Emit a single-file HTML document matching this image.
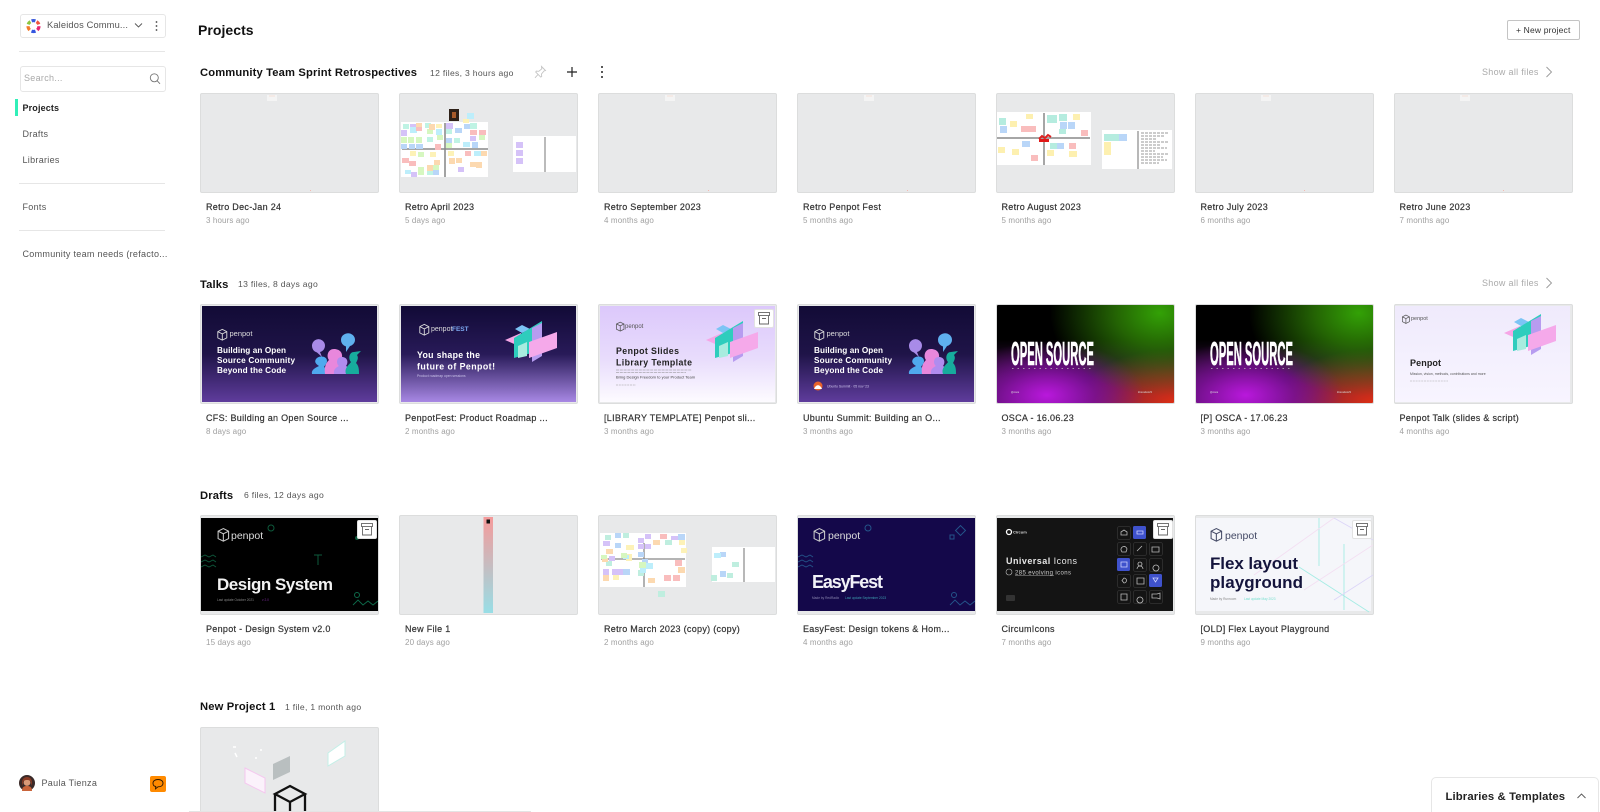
<!DOCTYPE html>
<html lang="en">
<head>
<meta charset="utf-8">
<title>Projects</title>
<style>
*{box-sizing:border-box}
html,body{margin:0;padding:0;background:#fff}
body{width:1600px;height:812px;overflow:hidden;position:relative;font-family:"Liberation Sans","DejaVu Sans",sans-serif;color:#222}
#w{position:absolute;left:0;top:0;width:1600px;height:812px;overflow:hidden;filter:blur(.35px)}
.a{position:absolute;white-space:nowrap;line-height:1}
.c{position:absolute;width:179px;height:100px;border:1.5px solid #dcdddd;border-radius:2px;background:#e8e9ea;overflow:hidden}
.c svg{position:absolute;left:-1.5px;top:-1.5px;width:179px;height:100px;display:block}
.n{position:absolute;white-space:nowrap;font-size:9px;letter-spacing:.3px;color:#333;line-height:12px;-webkit-text-stroke:.2px #333;margin-top:-.5px}
.d{position:absolute;white-space:nowrap;font-size:8px;letter-spacing:.12px;color:#a0a0a0;line-height:10px;margin-top:1px}
.t{position:absolute;white-space:nowrap;font-weight:bold;font-size:11.2px;letter-spacing:.15px;color:#111;line-height:14px}
.s{position:absolute;white-space:nowrap;font-size:8.6px;letter-spacing:.3px;color:#555;line-height:12px}
.m{position:absolute;left:22.5px;font-size:9px;letter-spacing:.3px;color:#555;line-height:12px;white-space:nowrap}
.l{position:absolute;left:19px;width:146px;height:1px;background:#e6e6e6}
.sa{position:absolute;left:1482px;font-size:9px;letter-spacing:.3px;color:#aaa;line-height:12px;white-space:nowrap}
.ar{position:absolute;width:20px;height:19px;background:#fff;border:1px solid #e2e2e2;border-radius:2px}
.os{background:radial-gradient(ellipse 62% 85% at 92% 8%,#33a106 0,rgba(45,125,5,.8) 40%,rgba(20,60,0,0) 100%),radial-gradient(ellipse 55% 55% at 28% 92%,#b918dc 0,rgba(130,15,160,.75) 50%,rgba(100,10,130,0) 100%),radial-gradient(ellipse 55% 55% at 100% 100%,#dc2f14 0,rgba(170,40,30,.75) 55%,rgba(130,40,40,0) 100%),linear-gradient(#000 0,#000 35%,#3b1145 75%,#5a1766 100%)}
text{font-family:"Liberation Sans",sans-serif}
</style>
</head>
<body>
<svg width="0" height="0" style="position:absolute">
<defs>
<g id="iso">
<polygon points="116,25 123,21 131,25 123,29" fill="#7cc4f5"/>
<polygon points="106,36 122,29 122,43" fill="#f6a6e6"/>
<polygon points="115,34 143,17 143,46 115,54" fill="#2ecdbd"/>
<polygon points="119,42 128,38 128,52 119,54" fill="#a8ecdf"/>
<polygon points="133,24 143,19 143,52 133,58" fill="#b79cf0"/>
<polygon points="130,38 158,28 158,44 130,54" fill="#f5a9ea"/>
</g>
<g id="ppl">
<path d="M112 42a6.500 6.500 0 1 1 8 6l2 5-5-4.500a6.500 6.500 0 0 1-5-6.500z" fill="#a88be8"/>
<path d="M141 36a7 6.500 0 1 1 9 6l-4 6 0-5.500a7 6.500 0 0 1-5-6.500z" fill="#5fb0ee"/>
<path d="M112 70c-1-4 3-6 7-8-3-2-5-4-3-7 3-4 11-3 11 2 0 3-2 4-3 6 3 2 4 4 4 7z" fill="#50a9ee"/>
<path d="M125 70c-1-7 1-11 4-14-3-4-1-11 5-11 5 0 9 3 8 9-1 4 3 9 2 16z" fill="#e887dc"/>
<path d="M134 70c-1-5 3-7 5-8-3-2-3-9 3-9 5 0 7 5 4 9 4 2 6 4 6 8z" fill="#b08cef"/>
<path d="M146 70c-2-6 3-9 5-12-3-3-2-10 3-10l7-1-4 4c2 3 0 6-1 8 3 3 3 7 3 11z" fill="#17ac9d"/>
</g>
<g id="box" fill="none" stroke-width="1"><path d="M2 4l5-2.500 5 2.500v7l-5 2.500-5-2.500zM2 4l5 2.500 5-2.500M7 6.500v7"/></g>
<g id="arc" fill="none" stroke="#666" stroke-width=".9"><rect x="5.500" y="4.500" width="11" height="3"/><path d="M6.500 7.500v8.500h9v-8.500M9 10.500h4"/></g>
</defs>
</svg>
<div id="w">

<!-- SIDEBAR -->
<div class="a" style="left:19.500px;top:13.500px;width:146px;height:24px;border:1px solid #e6e6e6;border-radius:3px"></div>
<svg class="a" style="left:26px;top:18px" width="15" height="16" viewBox="0 0 15 16"><circle cx="7.500" cy="8" r="7" fill="#fff"/><g fill="none" stroke-width="3.200"><path d="M5.600 2.900A5.500 5.500 0 0 1 9.400 2.900" stroke="#3b5bdb"/><path d="M10.600 3.600A5.500 5.500 0 0 1 12.800 6.400" stroke="#f0563e"/><path d="M13 8.200A5.500 5.500 0 0 1 11.300 12" stroke="#e8266f"/><path d="M9.500 13.100A5.500 5.500 0 0 1 5.500 13.100" stroke="#3556e0"/><path d="M3.700 12A5.500 5.500 0 0 1 2 8.200" stroke="#f47a2a"/><path d="M2.200 6.400A5.500 5.500 0 0 1 4.400 3.600" stroke="#8cc63f"/></g></svg>
<div class="a" style="left:47px;top:21px;font-size:9.300px;letter-spacing:.15px;color:#555">Kaleidos Commu...</div>
<svg class="a" style="left:134px;top:22px" width="9" height="7" viewBox="0 0 9 7"><path d="M1 1.500l3.500 3.500 3.500-3.500" fill="none" stroke="#555" stroke-width=".9"/></svg>
<svg class="a" style="left:155px;top:20px" width="3" height="12" viewBox="0 0 3 12"><g fill="#444"><circle cx="1.500" cy="2" r=".9"/><circle cx="1.500" cy="6" r=".9"/><circle cx="1.500" cy="10" r=".9"/></g></svg>
<div class="l" style="top:51px"></div>
<div class="a" style="left:19.500px;top:65.500px;width:146px;height:26px;border:1px solid #e6e6e6;border-radius:3px"></div>
<div class="a" style="left:24px;top:74px;font-size:9px;letter-spacing:.3px;color:#aaa">Search...</div>
<svg class="a" style="left:149px;top:72px" width="12" height="13" viewBox="0 0 12 13"><circle cx="5.300" cy="5.800" r="4" fill="none" stroke="#777" stroke-width=".9"/><path d="M8.200 8.800l2.800 3" stroke="#777" stroke-width=".9"/></svg>
<div class="a" style="left:15px;top:99px;width:2.500px;height:16.500px;background:#31efb8"></div>
<div class="m" style="top:102px;font-weight:bold;color:#222;letter-spacing:.15px">Projects</div>
<div class="m" style="top:128px">Drafts</div>
<div class="m" style="top:154px">Libraries</div>
<div class="l" style="top:183px"></div>
<div class="m" style="top:201px">Fonts</div>
<div class="l" style="top:230px"></div>
<div class="m" style="top:248px">Community team needs (refacto...</div>
<svg class="a" style="left:19px;top:775px" width="16" height="16" viewBox="0 0 16 16"><circle cx="8" cy="8" r="8" fill="#3a2a28"/><path d="M3 16c0-4 2-5 5-5s5 1 5 5z" fill="#c9643a"/><circle cx="8" cy="7.500" r="3.400" fill="#d99a78"/><path d="M3 8c0-4 2-6 5-6s5 2 5 6l-1 3V7C11 5 9 5 8 5S5 5 4 7v4z" fill="#8a3b24"/></svg>
<div class="a" style="left:41.500px;top:779px;font-size:9px;letter-spacing:.3px;color:#555">Paula Tienza</div>
<div class="a" style="left:150px;top:775.500px;width:16px;height:16px;border-radius:2px;background:#ff8a00"></div>
<svg class="a" style="left:150px;top:775.500px" width="16" height="16" viewBox="0 0 16 16"><path d="M8 3.500c3 0 5 1.500 5 3.700s-2 3.600-5 3.600l-2.500 2 .3-2.300C4 10.200 3 8.800 3 7.200 3 5 5 3.500 8 3.500z" fill="none" stroke="#2a1500" stroke-width=".9"/></svg>

<!-- HEADER -->
<div class="a" style="left:198px;top:23px;font-size:14px;font-weight:bold;color:#111;letter-spacing:.05px">Projects</div>
<div class="a" style="left:1507px;top:20px;width:72.500px;height:20px;border:1px solid #c4c4c4;border-radius:2px;text-align:center;font-size:8.500px;line-height:18px;letter-spacing:.18px;color:#333">+ New project</div>

<!-- SECTION 1 -->
<div class="t" style="left:200px;top:66px">Community Team Sprint Retrospectives</div>
<div class="s" style="left:430px;top:66.500px">12 files, 3 hours ago</div>
<svg class="a" style="left:534px;top:65px" width="13" height="14" viewBox="0 0 13 14"><path d="M7.500 1.500l4 4-1.500 .5-2.500 3 .2 2.500-1 .6-5-5 .6-1 2.500 .2 3-2.500zM4 9.500l-3 3.300" fill="none" stroke="#c4c4c4" stroke-width=".9"/></svg>
<svg class="a" style="left:566px;top:66px" width="12" height="12" viewBox="0 0 12 12"><path d="M6 1v10M1 6h10" stroke="#222" stroke-width="1.200"/></svg>
<svg class="a" style="left:600px;top:65px" width="4" height="14" viewBox="0 0 4 14"><g fill="#222"><circle cx="2" cy="2" r="1"/><circle cx="2" cy="7" r="1"/><circle cx="2" cy="12" r="1"/></g></svg>
<div class="sa" style="top:66px">Show all files</div>
<svg class="a" style="left:1545px;top:66px" width="8" height="12" viewBox="0 0 8 12"><path d="M1.500 1l5 5-5 5" fill="none" stroke="#999" stroke-width=".9"/></svg>

<div class="c" style="left:200px;top:93px"><svg viewBox="0 0 179 100"><rect x="67" y="2" width="10" height="6" fill="#f4f4f4"/><path d="M69 3h6" stroke="#f6cdbc" stroke-width=".5"/><rect x="110" y="97" width="1" height="1" fill="#f4b9b0"/></svg></div>
<div class="c" style="left:399px;top:93px"><svg viewBox="0 0 179 100">
<rect x="2" y="29" width="87" height="55" fill="#fff"/><rect x="114" y="43" width="63" height="36" fill="#fff"/>
<path d="M46 30v54" stroke="#666" stroke-width="1.200"/><path d="M3 56h86" stroke="#888" stroke-width="1.500"/><path d="M146 44v35" stroke="#777" stroke-width="1"/>
<rect x="50" y="16" width="10" height="12" fill="#2e2018"/><rect x="53" y="19" width="4" height="6" fill="#a85a2a"/>
<path fill="#d5c2f8" d="M47 30h7v6h-7zM11 31h6v5h-6zM2 37h6v6H2zM71 43h6v5h-6zM12 79h6v5h-6zM59 74h6v5h-6zM117 49h7v6h-7zM117 57h7v6h-7zM117 65h7v6h-7z"/>
<path fill="#bff3e4" d="M4 31h6v5H4zM26 30h6v5h-6zM71 30h7v6h-7zM47 36h6v5h-6zM28 44h6v5h-6zM55 45h6v5h-6zM28 77h6v5h-6z"/>
<path fill="#b9d6f8" d="M56 35h7v5h-7zM2 51h6v5H2zM10 51h6v5h-6zM17 51h7v5h-7zM47 45h6v5h-6zM73 49h6v6h-6zM34 77h6v5h-6zM65 31h6v5h-6z"/>
<path fill="#bdeefb" d="M11 34h7v6h-7zM37 36h6v6h-6zM64 49h7v5h-7zM75 58h7v5h-7zM6 77h6v4H6zM68 20h7v6h-7z"/>
<path fill="#d6f7c0" d="M2 44h6v6H2zM9 44h6v6H9zM17 44h6v6h-6zM28 36h6v5h-6zM38 42h6v5h-6zM47 50h6v5h-6zM80 42h6v5h-6zM19 59h6v5h-6zM19 74h6v8h-6zM34 72h6v5h-6z"/>
<path fill="#f9bdbd" d="M71 37h7v5h-7zM80 37h7v5h-7zM36 51h6v6h-6zM66 58h6v5h-6zM3 65h7v5H3zM10 68h7v5h-7zM17 33h6v5h-6z"/>
<path fill="#fcd9b0" d="M30 31h6v6h-6zM17 30h6v4h-6zM50 65h6v6h-6zM57 65h6v5h-6zM28 72h6v6h-6zM71 69h6v5h-6zM77 69h6v6h-6zM35 67h6v5h-6zM82 58h6v5h-6z"/>
<path fill="#fdf2b8" d="M37 31h6v4h-6zM11 58h6v5h-6zM31 59h6v5h-6zM49 58h6v5h-6zM64 26h6v4h-6z"/>
</svg></div>
<div class="c" style="left:598px;top:93px"><svg viewBox="0 0 179 100"><rect x="67" y="2" width="10" height="6" fill="#f4f4f4"/><path d="M69 3h6" stroke="#f6cdbc" stroke-width=".5"/><rect x="110" y="97" width="1" height="1" fill="#f4b9b0"/></svg></div>
<div class="c" style="left:797px;top:93px"><svg viewBox="0 0 179 100"><rect x="67" y="2" width="10" height="6" fill="#f4f4f4"/><path d="M69 3h6" stroke="#f6cdbc" stroke-width=".5"/><rect x="110" y="97" width="1" height="1" fill="#f4b9b0"/></svg></div>
<div class="c" style="left:995.600px;top:93px"><svg viewBox="0 0 179 100">
<rect x="1" y="19" width="95" height="53" fill="#fff"/><rect x="107" y="37" width="70" height="39" fill="#fff"/>
<path d="M49 20v52" stroke="#888" stroke-width="1.500"/><path d="M2 45h93" stroke="#888" stroke-width="1.500"/><path d="M143 38v38" stroke="#888" stroke-width="1.200"/>
<path fill="#b5ecdf" d="M4 25h7v7H4zM52 22h10v8H52zM64 21h8v7h-8zM64 36h7v5h-7zM55 50h7v6h-7zM109 41h16v7h-16z"/>
<path fill="#b9d6f8" d="M5 33h7v7H5zM65 29h7v7h-7zM73 29h7v7h-7zM27 48h8v6h-8zM62 50h7v6h-7zM124 41h8v7h-8z"/>
<path fill="#fdf0b0" d="M15 28h7v6h-7zM31 21h7v5h-7zM78 21h7v6h-7zM3 54h7v6H3zM17 56h7v6h-7zM52 57h7v6h-7zM74 58h8v6h-8zM109 49h7v7h-7zM109 56h7v6h-7z"/>
<path fill="#f9bdbd" d="M26 33h15v6H26zM86 37h7v6h-7zM36 62h7v6h-7zM74 50h7v6h-7z"/>
<path d="M44 46l3-3 3 2 3-3 3 2" fill="none" stroke="#d22" stroke-width="2"/><rect x="44" y="46" width="10" height="3" fill="#e01818"/>
<path d="M146 40h28M146 43h24M146 46h16M146 49h28M146 52h20M146 55h26M146 58h14M146 61h28M146 64h22M146 67h26M146 70h18" stroke="#777" stroke-width=".7" stroke-dasharray="3 1"/>
</svg></div>
<div class="c" style="left:1194.600px;top:93px"><svg viewBox="0 0 179 100"><rect x="67" y="2" width="10" height="6" fill="#f4f4f4"/><path d="M69 3h6" stroke="#f6cdbc" stroke-width=".5"/><rect x="110" y="97" width="1" height="1" fill="#f4b9b0"/></svg></div>
<div class="c" style="left:1393.600px;top:93px"><svg viewBox="0 0 179 100"><rect x="67" y="2" width="10" height="6" fill="#f4f4f4"/><path d="M69 3h6" stroke="#f6cdbc" stroke-width=".5"/><rect x="110" y="97" width="1" height="1" fill="#f4b9b0"/></svg></div>

<div class="n" style="left:206px;top:201px">Retro Dec-Jan 24</div><div class="d" style="left:206px;top:215px">3 hours ago</div>
<div class="n" style="left:405px;top:201px">Retro April 2023</div><div class="d" style="left:405px;top:215px">5 days ago</div>
<div class="n" style="left:604px;top:201px">Retro September 2023</div><div class="d" style="left:604px;top:215px">4 months ago</div>
<div class="n" style="left:803px;top:201px">Retro Penpot Fest</div><div class="d" style="left:803px;top:215px">5 months ago</div>
<div class="n" style="left:1001.500px;top:201px">Retro August 2023</div><div class="d" style="left:1001.500px;top:215px">5 months ago</div>
<div class="n" style="left:1200.500px;top:201px">Retro July 2023</div><div class="d" style="left:1200.500px;top:215px">6 months ago</div>
<div class="n" style="left:1399.500px;top:201px">Retro June 2023</div><div class="d" style="left:1399.500px;top:215px">7 months ago</div>

<!-- SECTION 2 -->
<div class="t" style="left:200px;top:277.500px">Talks</div>
<div class="s" style="left:238px;top:277.500px">13 files, 8 days ago</div>
<div class="sa" style="top:277px">Show all files</div>
<svg class="a" style="left:1545px;top:277px" width="8" height="12" viewBox="0 0 8 12"><path d="M1.500 1l5 5-5 5" fill="none" stroke="#999" stroke-width=".9"/></svg>

<div class="c" style="left:200px;top:304px"><svg viewBox="0 0 179 100">
<defs><linearGradient id="g1" x1="0" y1="0" x2="0" y2="1"><stop offset="0" stop-color="#120b36"/><stop offset=".5" stop-color="#1f1448"/><stop offset="1" stop-color="#5f3c9c"/></linearGradient>
<linearGradient id="g2" x1="0" y1="0" x2="0" y2="1"><stop offset="0" stop-color="#110a36"/><stop offset=".5" stop-color="#281a58"/><stop offset="1" stop-color="#a888e4"/></linearGradient>
<linearGradient id="g3" x1="0" y1="0" x2="0" y2="1"><stop offset="0" stop-color="#dcc8fb"/><stop offset=".55" stop-color="#e8dcfc"/><stop offset="1" stop-color="#fdfbff"/></linearGradient>
<linearGradient id="g4" x1="0" y1="0" x2="0" y2="1"><stop offset="0" stop-color="#f59a9a"/><stop offset="1" stop-color="#98dee6"/></linearGradient>
<linearGradient id="g5" x1="0" y1="0" x2="0" y2="1"><stop offset="0" stop-color="#efeafc"/><stop offset="1" stop-color="#f8f5ff"/></linearGradient></defs>
<rect x="2" y="2" width="175" height="96" fill="url(#g1)"/>
<use href="#box" transform="translate(16,24) scale(.9)" stroke="#ddd"/><text x="29.500" y="32" font-size="7.500" fill="#ddd">penpot</text>
<text font-size="8.200" font-weight="bold" fill="#fff"><tspan x="17" y="49" textLength="69">Building an Open</tspan><tspan x="17" y="59" textLength="78">Source Community</tspan><tspan x="17" y="69" textLength="69">Beyond the Code</tspan></text>
<use href="#ppl"/>
</svg></div>
<div class="c" style="left:399px;top:304px"><svg viewBox="0 0 179 100">
<rect x="2" y="2" width="175" height="96" fill="url(#g2)"/>
<use href="#box" transform="translate(19,19) scale(.9)" stroke="#ddd"/><text x="32" y="27" font-size="7" fill="#ddd">penpot</text><text x="53" y="27" font-size="6.500" font-weight="bold" fill="#7ca8f0">FEST</text>
<text font-size="8.800" font-weight="bold" fill="#fff"><tspan x="18" y="54" textLength="63">You shape the</tspan><tspan x="18" y="65.500" textLength="78">future of Penpot!</tspan></text>
<text x="18" y="73" font-size="3.400" fill="#c8c0e8">Product roadmap open sessions</text>
<use href="#iso"/>
</svg></div>
<div class="c" style="left:598px;top:304px"><svg viewBox="0 0 179 100">
<rect x="2" y="2" width="175" height="96" fill="url(#g3)"/>
<use href="#box" transform="translate(17,17) scale(.75)" stroke="#555"/><text x="27" y="24" font-size="6" fill="#555">penpot</text>
<text font-size="8.800" font-weight="bold" fill="#222"><tspan x="18" y="50" textLength="63">Penpot Slides</tspan><tspan x="18" y="61.500" textLength="76">Library Template</tspan></text>
<path d="M18 66h76M18 68.500h70" stroke="#888" stroke-width=".6" stroke-dasharray="3 .8"/>
<text x="18" y="74.500" font-size="4" fill="#444">Bring Design Freedom to your Product Team</text>
<path d="M18 81h20" stroke="#999" stroke-width=".5" stroke-dasharray="2 .8"/>
<use href="#iso" transform="translate(2,0)"/>
</svg><div class="ar" style="left:155px;top:3.500px"><svg style="left:-2px;top:-2px;width:22px;height:22px" viewBox="0 0 22 22"><use href="#arc"/></svg></div></div>
<div class="c" style="left:797px;top:304px"><svg viewBox="0 0 179 100">
<rect x="2" y="2" width="175" height="96" fill="url(#g1)"/>
<use href="#box" transform="translate(16,24) scale(.9)" stroke="#ddd"/><text x="29.500" y="32" font-size="7.500" fill="#ddd">penpot</text>
<text font-size="8.200" font-weight="bold" fill="#fff"><tspan x="17" y="49" textLength="69">Building an Open</tspan><tspan x="17" y="59" textLength="78">Source Community</tspan><tspan x="17" y="69" textLength="69">Beyond the Code</tspan></text>
<use href="#ppl"/>
<circle cx="21" cy="82" r="4.500" fill="#e8622a"/><path d="M17 85c2-5 6-5 8 0z" fill="#fff"/>
<text x="30" y="83.500" font-size="3.400" fill="#cfc6ee">Ubuntu Summit · 05 nov '23</text>
</svg></div>
<div class="c os" style="left:995.600px;top:304px"><svg viewBox="0 0 179 100">
<text transform="translate(16,61) scale(.58,1)" font-size="33" font-weight="bold" fill="#fff" stroke="#fff" stroke-width=".6" textLength="143" lengthAdjust="spacingAndGlyphs">OPEN SOURCE</text>
<path d="M17 64.500h80" stroke="#bbb" stroke-width=".8" stroke-dasharray="1.500 4"/>
<text x="16" y="89" font-size="2.600" fill="#ddd">@osca</text><text x="143" y="89" font-size="2.600" fill="#ddd">#oscafest23</text>
</svg></div>
<div class="c os" style="left:1194.600px;top:304px"><svg viewBox="0 0 179 100">
<text transform="translate(16,61) scale(.58,1)" font-size="33" font-weight="bold" fill="#fff" stroke="#fff" stroke-width=".6" textLength="143" lengthAdjust="spacingAndGlyphs">OPEN SOURCE</text>
<path d="M17 64.500h80" stroke="#bbb" stroke-width=".8" stroke-dasharray="1.500 4"/>
<text x="16" y="89" font-size="2.600" fill="#ddd">@osca</text><text x="143" y="89" font-size="2.600" fill="#ddd">#oscafest23</text>
</svg></div>
<div class="c" style="left:1393.600px;top:304px"><svg viewBox="0 0 179 100">
<rect x="2" y="2" width="175" height="96" fill="url(#g5)"/>
<use href="#box" transform="translate(8,10) scale(.7)" stroke="#555"/><text x="18" y="16" font-size="5.500" fill="#555">penpot</text>
<text x="17" y="62" font-size="9" font-weight="bold" fill="#222" textLength="31">Penpot</text>
<text x="17" y="71" font-size="3.500" fill="#555">Mission, vision, methods, contributions and more</text>
<path d="M17 77h38" stroke="#aaa" stroke-width=".5" stroke-dasharray="2 .8"/>
<use href="#iso" transform="translate(5,-7)"/>
</svg></div>

<div class="n" style="left:206px;top:412px">CFS: Building an Open Source ...</div><div class="d" style="left:206px;top:426px">8 days ago</div>
<div class="n" style="left:405px;top:412px">PenpotFest: Product Roadmap ...</div><div class="d" style="left:405px;top:426px">2 months ago</div>
<div class="n" style="left:604px;top:412px">[LIBRARY TEMPLATE] Penpot sli...</div><div class="d" style="left:604px;top:426px">3 months ago</div>
<div class="n" style="left:803px;top:412px">Ubuntu Summit: Building an O...</div><div class="d" style="left:803px;top:426px">3 months ago</div>
<div class="n" style="left:1001.500px;top:412px">OSCA - 16.06.23</div><div class="d" style="left:1001.500px;top:426px">3 months ago</div>
<div class="n" style="left:1200.500px;top:412px">[P] OSCA - 17.06.23</div><div class="d" style="left:1200.500px;top:426px">3 months ago</div>
<div class="n" style="left:1399.500px;top:412px">Penpot Talk (slides &amp; script)</div><div class="d" style="left:1399.500px;top:426px">4 months ago</div>

<!-- SECTION 3 -->
<div class="t" style="left:200px;top:488.500px">Drafts</div>
<div class="s" style="left:244px;top:488.500px">6 files, 12 days ago</div>

<div class="c" style="left:200px;top:515px"><svg viewBox="0 0 179 100">
<rect x="1" y="3" width="177" height="93" fill="#000"/>
<use href="#box" transform="translate(16,12) scale(1.050)" stroke="#ccc"/><text x="31" y="24" font-size="10.500" fill="#ddd">penpot</text>
<circle cx="71" cy="13" r="3" fill="none" stroke="#0e5a3c"/><circle cx="157" cy="23" r="2" fill="#0e5a3c"/>
<path d="M114 40h8M118 40v10" stroke="#0e5a3c"/>
<path d="M1 42l4-2 4 2 4-2 3 2M1 47l4-2 4 2 4-2 3 2M1 52l4-2 4 2 4-2 3 2" fill="none" stroke="#0e5a3c" stroke-width=".8"/>
<circle cx="157" cy="80" r="2.500" fill="none" stroke="#0e6a4a"/><path d="M153 90l5-5 5 5 5-4 5 4 5-4" fill="none" stroke="#0e6a4a" stroke-width=".9"/>
<text x="17" y="75" font-size="17" font-weight="bold" fill="#f2f2f2" textLength="116">Design System</text>
<text x="17" y="86" font-size="3.200" fill="#888">Last update October 2021</text><text x="62" y="86" font-size="3.200" fill="#7a2a9a">v 2.0</text>
</svg><div class="ar" style="left:156px;top:3.500px"><svg style="left:-2px;top:-2px;width:22px;height:22px" viewBox="0 0 22 22"><use href="#arc"/></svg></div></div>
<div class="c" style="left:399px;top:515px"><svg viewBox="0 0 179 100"><rect x="84.500" y="2" width="9.500" height="96" fill="url(#g4)"/><rect x="87.500" y="4.500" width="3.500" height="4" fill="#111"/></svg></div>
<div class="c" style="left:598px;top:515px"><svg viewBox="0 0 179 100">
<rect x="2" y="18" width="86" height="54" fill="#fff"/><rect x="114" y="32" width="63" height="35" fill="#fff"/>
<path d="M46 28v44" stroke="#888" stroke-width="1.300"/><path d="M3 44h84" stroke="#888" stroke-width="1.300"/><path d="M146 33v34" stroke="#888" stroke-width="1.200"/>
<path fill="#d5c2f8" d="M40 23h6v5h-6zM47 19h6v5h-6zM40 29h6v5h-6zM47 29h6v5h-6zM73 21h7v4h-7zM5 26h7v5H5zM11 41h6v5h-6zM5 54h6v6H5zM14 54h6v6h-6zM20 54h6v6h-6z"/>
<path fill="#b9d6f8" d="M17 18h6v5h-6zM17 28h6v5h-6zM80 19h7v6h-7zM40 37h6v5h-6zM44 44h6v5h-6zM25 54h7v6h-7zM122 37h6v5h-6zM122 56h6v6h-6z"/>
<path fill="#bfeedf" d="M7 20h6v5H7zM25 18h6v5h-6zM67 25h7v5h-7zM8 46h6v5H8zM40 55h6v6h-6zM113 60h6v6h-6zM134 47h7v5h-7zM60 76h7v6h-7zM129 58h6v5h-6z"/>
<path fill="#fdf2b8" d="M28 30h6v5h-6zM30 30h6v5h-6zM28 39h6v4h-6zM83 33h6v5h-6zM15 60h6v5h-6zM28 42h6v4h-6zM81 25h6v5h-6z"/>
<path fill="#bdeefb" d="M48 48h7v6h-7zM42 53h6v5h-6zM116 38h7v5h-7zM25 40h6v4h-6z"/>
<path fill="#f9bdbd" d="M62 19h7v5h-7zM77 45h7v6h-7zM66 60h7v6h-7zM75 60h7v6h-7z"/>
<path fill="#fcd9b0" d="M55 25h7v5h-7zM80 52h7v6h-7zM50 63h7v5h-7zM5 60h6v6H5zM8 34h7v5H8zM4 43h6v4H4z"/>
<path fill="#d6f7c0" d="M41 47h7v6h-7zM23 38h6v5h-6zM3 40h6v4H3z"/>
</svg></div>
<div class="c" style="left:797px;top:515px"><svg viewBox="0 0 179 100">
<rect x="1" y="3" width="177" height="93" fill="#14084a"/>
<use href="#box" transform="translate(15,12) scale(1.050)" stroke="#ccc"/><text x="31" y="24" font-size="10.500" fill="#ddd">penpot</text>
<circle cx="71" cy="13" r="3" fill="none" stroke="#24558a"/><rect x="160" y="12" width="7" height="7" transform="rotate(45 163.500 15.500)" fill="none" stroke="#24558a"/><rect x="153" y="20" width="4" height="4" fill="none" stroke="#24558a"/>
<path d="M1 42l4-2 4 2 4-2 3 2M1 47l4-2 4 2 4-2 3 2M1 52l4-2 4 2 4-2 3 2" fill="none" stroke="#24558a" stroke-width=".8"/>
<circle cx="157" cy="80" r="2.500" fill="none" stroke="#24558a"/><path d="M153 90l5-5 5 5 5-4 5 4 5-4" fill="none" stroke="#24558a" stroke-width=".9"/>
<text x="15" y="73" font-size="18" font-weight="bold" fill="#f2f2f8" textLength="71">EasyFest</text>
<text x="15" y="84" font-size="3.200" fill="#8a86b0">Made by RedRadix</text><text x="48" y="84" font-size="3.200" fill="#3d9fb0">Last update September 2023</text>
</svg></div>
<div class="c" style="left:995.600px;top:515px"><svg viewBox="0 0 179 100">
<rect x="1" y="3" width="177" height="93" fill="#141414"/>
<circle cx="14" cy="17" r="2.500" fill="none" stroke="#fff" stroke-width="1.300"/><text x="18" y="18.500" font-size="4" font-weight="bold" fill="#ddd">Circum</text>
<text x="11" y="49" font-size="9" font-weight="bold" fill="#e6e6e6" textLength="71">Universal <tspan font-weight="normal">Icons</tspan></text>
<circle cx="14" cy="57" r="3" fill="none" stroke="#bbb" stroke-width=".6"/>
<text x="20" y="59.500" font-size="6" fill="#ccc" textLength="56">285 evolving icons</text><path d="M20 60.500h39" stroke="#ccc" stroke-width=".4"/>
<rect x="11" y="80" width="9" height="6" rx="1" fill="#333"/>
<g fill="none" stroke="#333" stroke-width=".8"><rect x="122.500" y="11.500" width="13" height="13" rx="2"/><rect x="122.500" y="27.500" width="13" height="13" rx="2"/><rect x="138.500" y="27.500" width="13" height="13" rx="2"/><rect x="154.500" y="27.500" width="13" height="13" rx="2"/><rect x="138.500" y="43.500" width="13" height="13" rx="2"/><rect x="154.500" y="43.500" width="13" height="13" rx="2"/><rect x="122.500" y="59.500" width="13" height="13" rx="2"/><rect x="138.500" y="59.500" width="13" height="13" rx="2"/><rect x="122.500" y="75.500" width="13" height="13" rx="2"/><rect x="138.500" y="75.500" width="13" height="13" rx="2"/><rect x="154.500" y="75.500" width="13" height="13" rx="2"/></g>
<g fill="#3f52cc"><rect x="138" y="11" width="13" height="13" rx="1.500"/><rect x="122" y="43" width="13" height="13" rx="1.500"/><rect x="154" y="59" width="13" height="13" rx="1.500"/></g>
<g fill="none" stroke="#bbb" stroke-width=".8"><path d="M126 20v-3l3-2 3 2v3zM126 35a3 3 0 0 1 6-1l-1 3h-4zM142 36l5-5M157 32h7v5h-7zM145 47a2 2 0 1 1-.1 0M142 54a3 3 0 0 1 6 0M161 50a3 3 0 1 1-.1 0M129 63a2.500 2.500 0 0 1 0 5l-2-2.500zM142 63h7v6h-7zM126 79h6v6h-6zM145 82a3 3 0 1 1-.1 0M157 79h5l3-1v6l-3-1h-5z"/></g>
<g fill="none" stroke="#cfd4ff" stroke-width=".8"><path d="M142 16h6v3h-6zM126 47h6v5h-6zM158 63l2.500 4 2.500-4z"/></g>
</svg><div class="ar" style="left:156px;top:3.500px"><svg style="left:-2px;top:-2px;width:22px;height:22px" viewBox="0 0 22 22"><use href="#arc"/></svg></div></div>
<div class="c" style="left:1194.600px;top:515px"><svg viewBox="0 0 179 100">
<rect x="2" y="3" width="175" height="93" fill="#f5f6fa"/>
<g fill="none" stroke-width=".9"><path d="M125 3v48M150 29v66" stroke="#a5ece4"/><path d="M60 60L140 3M110 75L179 30" stroke="#f3dff2"/><path d="M105 52l70 45" stroke="#a5ece4"/><path d="M140 85l39-25M140 3l39 22" stroke="#dcd5f8"/></g>
<use href="#box" transform="translate(15,12) scale(1.050)" stroke="#444a66"/><text x="31" y="24" font-size="10.500" fill="#444a66">penpot</text>
<text font-size="17" font-weight="bold" fill="#14143c"><tspan x="16" y="54" textLength="88">Flex layout</tspan><tspan x="16" y="73" textLength="93">playground</tspan></text>
<text x="16" y="85" font-size="3.200" fill="#888">Made by Runroom</text><text x="50" y="85" font-size="3.200" fill="#77dfcf">Last update May 2023</text>
</svg><div class="ar" style="left:156px;top:3.500px"><svg style="left:-2px;top:-2px;width:22px;height:22px" viewBox="0 0 22 22"><use href="#arc"/></svg></div></div>

<div class="n" style="left:206px;top:623px">Penpot - Design System v2.0</div><div class="d" style="left:206px;top:637px">15 days ago</div>
<div class="n" style="left:405px;top:623px">New File 1</div><div class="d" style="left:405px;top:637px">20 days ago</div>
<div class="n" style="left:604px;top:623px">Retro March 2023 (copy) (copy)</div><div class="d" style="left:604px;top:637px">2 months ago</div>
<div class="n" style="left:803px;top:623px">EasyFest: Design tokens &amp; Hom...</div><div class="d" style="left:803px;top:637px">4 months ago</div>
<div class="n" style="left:1001.500px;top:623px">CircumIcons</div><div class="d" style="left:1001.500px;top:637px">7 months ago</div>
<div class="n" style="left:1200.500px;top:623px">[OLD] Flex Layout Playground</div><div class="d" style="left:1200.500px;top:637px">9 months ago</div>

<!-- SECTION 4 -->
<div class="t" style="left:200px;top:699.500px">New Project 1</div>
<div class="s" style="left:285px;top:700.500px">1 file, 1 month ago</div>
<div class="c" style="left:200px;top:726.500px"><svg viewBox="0 0 179 100">
<polygon points="45,42 65,52 65,67 45,57" fill="#fbf2fb" stroke="#f5c6ef"/>
<polygon points="128,27 145,15 145,30 128,40" fill="#fff" stroke="#c3efe7"/>
<polygon points="73,38 90,30 90,46 73,54" fill="#b9bfc0"/>
<path d="M33 21h3M35 27l2 4M60 24h2M55 32h2" stroke="#fff" stroke-width="1.500"/>
<path d="M90 60l15 8-15 8-15-8zM75 68v30M90 76v22M105 68v30" fill="none" stroke="#111" stroke-width="2.300"/>
</svg></div>
<div class="a" style="left:189px;top:811px;width:342px;height:1px;background:#e4e4e4"></div>

<!-- LIB PANEL -->
<div class="a" style="left:1431px;top:777px;width:168px;height:40px;background:#fff;border:1px solid #e6e6e6;border-radius:5px 5px 0 0"></div>
<div class="a" style="left:1445.500px;top:790.500px;font-size:11.300px;font-weight:bold;letter-spacing:.12px;color:#222;line-height:12px">Libraries &amp; Templates</div>
<svg class="a" style="left:1576px;top:792px" width="11" height="8" viewBox="0 0 11 8"><path d="M1.500 6l4-4 4 4" fill="none" stroke="#555" stroke-width=".9"/></svg>
</div>
</body>
</html>
